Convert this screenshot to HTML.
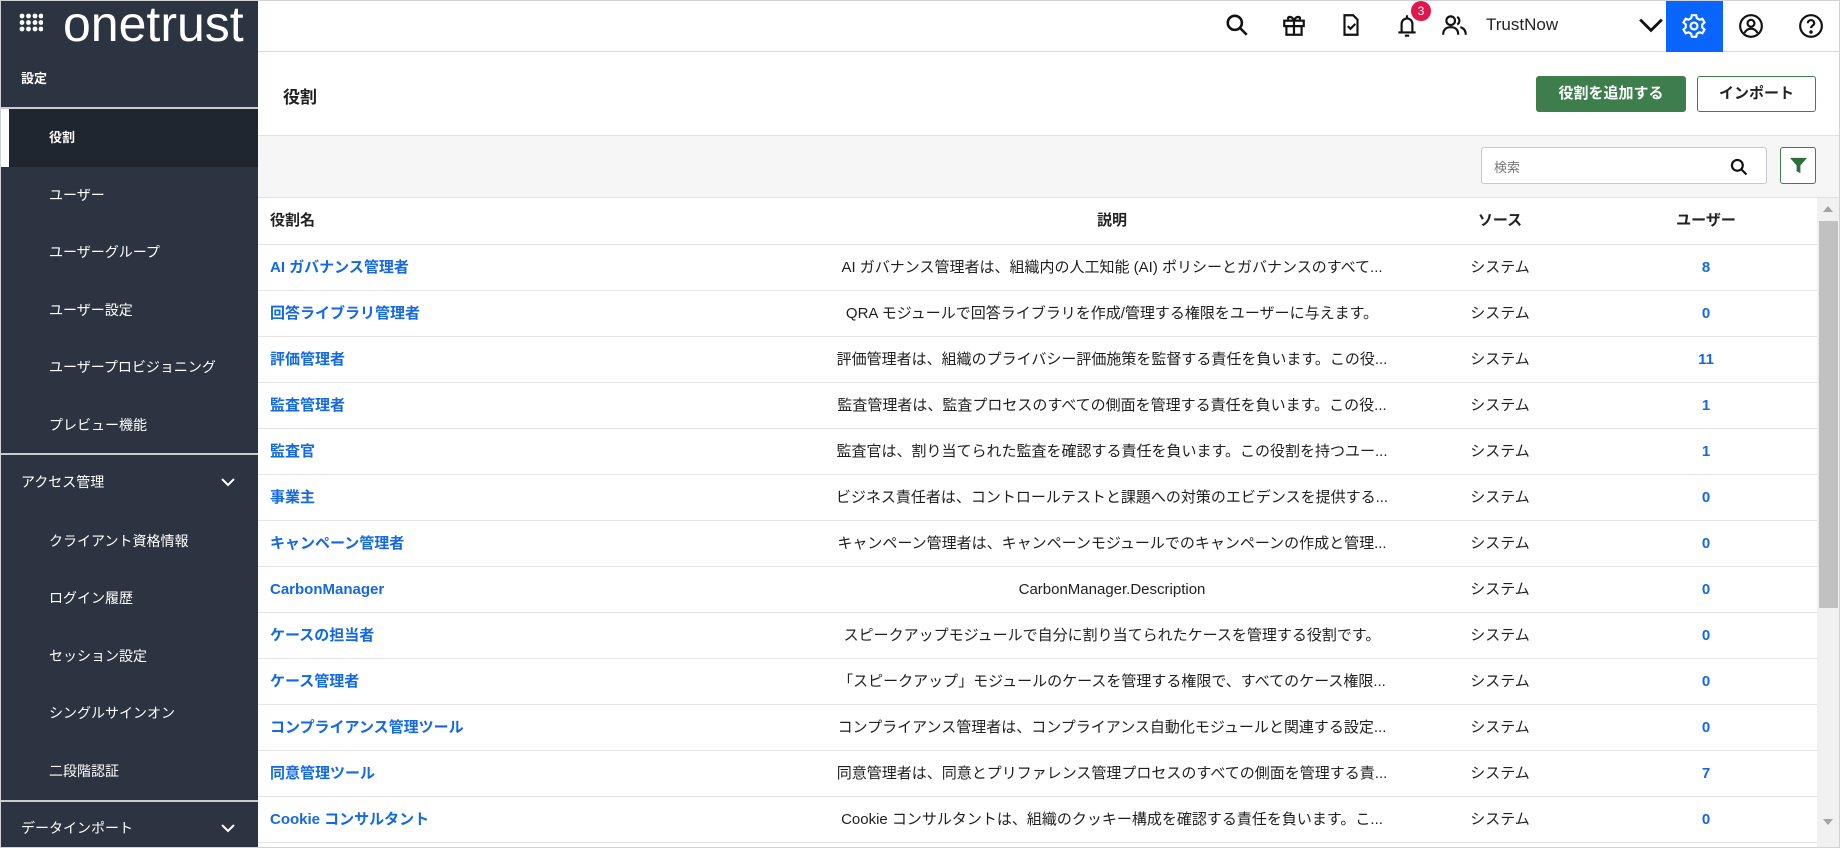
<!DOCTYPE html>
<html><head><meta charset="utf-8"><style>
*{box-sizing:border-box;margin:0;padding:0}
body{width:1840px;height:848px;overflow:hidden;font-family:"Liberation Sans","Noto Sans CJK JP",sans-serif;background:#fff;position:relative;color:#1f1f1f}
.a{position:absolute}
#side{left:0;top:0;width:258px;height:848px;background:#2c3441;color:#fff}
.si{position:absolute;left:0;width:258px;font-size:14px;padding-left:49px;line-height:20px}
.sec{padding-left:21px}
.dv{position:absolute;left:0;width:258px;height:2px;background:#c9ccd1}
.chev{position:absolute;right:22px;top:2px}
#top{left:258px;top:0;width:1582px;height:52px;border-bottom:1px solid #d4d6d9;background:#fff}
.ic{position:absolute;top:12px}
.row{position:absolute;left:258px;width:1559px;height:46px;border-bottom:1px solid #e3e4e6;font-size:15px}
.row span{line-height:20px}
.row .n{position:absolute;left:12px;top:13px;color:#1369e3;font-weight:bold}
.row .d{position:absolute;left:294px;width:1120px;text-align:center;top:13px}
.row .s{position:absolute;left:1192px;width:100px;text-align:center;top:13px}
.row .u{position:absolute;left:1398px;width:100px;text-align:center;top:13px;color:#1369e3;font-weight:bold}
</style></head><body>
<div id="side" class="a">
 <svg class="a" style="left:19px;top:13px" width="24" height="24" viewBox="0 0 24 24" fill="#fff">
  <circle cx="3" cy="3" r="2.4"/><circle cx="9.5" cy="3" r="2.4"/><circle cx="16" cy="3" r="2.4"/><circle cx="22" cy="3" r="2.4"/>
  <circle cx="3" cy="9.5" r="2.4"/><circle cx="9.5" cy="9.5" r="2.4"/><circle cx="16" cy="9.5" r="2.4"/><circle cx="22" cy="9.5" r="2.4"/>
  <circle cx="3" cy="16" r="2.4"/><circle cx="9.5" cy="16" r="2.4"/><circle cx="16" cy="16" r="2.4"/><circle cx="22" cy="16" r="2.4"/>
 </svg>
 <div class="a" style="left:63px;top:0;font-size:50px;line-height:48px;color:#fff;letter-spacing:0">onetrust</div>
 <div class="si sec" style="top:69px;font-weight:bold;font-size:13px">設定</div>
 <div class="dv" style="top:107px"></div>
 <div class="a" style="left:0;top:109px;width:258px;height:58px;background:#20262f"></div>
 <div class="a" style="left:0;top:109px;width:9px;height:58px;background:#fff"></div>
 <div class="si" style="top:128px;font-weight:bold;font-size:13px">役割</div>
 <div class="si" style="top:185px">ユーザー</div>
 <div class="si" style="top:242px">ユーザーグループ</div>
 <div class="si" style="top:300px">ユーザー設定</div>
 <div class="si" style="top:357px">ユーザープロビジョニング</div>
 <div class="si" style="top:415px">プレビュー機能</div>
 <div class="dv" style="top:453px"></div>
 <div class="si sec" style="top:472px">アクセス管理<svg class="chev" width="16" height="16" viewBox="0 0 16 16"><path d="M2 5l6 6 6-6" stroke="#fff" stroke-width="2" fill="none"/></svg></div>
 <div class="si" style="top:531px">クライアント資格情報</div>
 <div class="si" style="top:588px">ログイン履歴</div>
 <div class="si" style="top:646px">セッション設定</div>
 <div class="si" style="top:703px">シングルサインオン</div>
 <div class="si" style="top:761px">二段階認証</div>
 <div class="dv" style="top:800px"></div>
 <div class="si sec" style="top:818px">データインポート<svg class="chev" width="16" height="16" viewBox="0 0 16 16"><path d="M2 5l6 6 6-6" stroke="#fff" stroke-width="2" fill="none"/></svg></div>
</div>

<div id="top" class="a">
 <svg class="ic" style="left:966px" width="26" height="26" viewBox="0 0 24 24" fill="none" stroke="#111" stroke-width="2.4"><circle cx="10" cy="10" r="6.5"/><path d="M15 15l6 6"/></svg>
 <svg class="ic" style="left:1023px" width="26" height="26" viewBox="0 0 24 24" fill="none" stroke="#111" stroke-width="2"><rect x="3" y="8" width="18" height="5"/><rect x="5" y="13" width="14" height="8"/><path d="M12 8v13M12 8c-2-5-7-4-5-1M12 8c2-5 7-4 5-1"/></svg>
 <svg class="ic" style="left:1080px" width="26" height="26" viewBox="0 0 24 24" fill="none" stroke="#111" stroke-width="2"><path d="M6 3h8l4 4v14H6z"/><path d="M9 13l2.5 2.5L16 11"/></svg>
 <svg class="ic" style="left:1136px" width="26" height="28" viewBox="0 0 24 26" fill="none" stroke="#111" stroke-width="2"><path d="M12 3v2M7 19V11a5 5 0 0110 0v8M4 19h16M10 22h4"/></svg>
 <div class="a" style="left:1153px;top:1px;width:20px;height:20px;border-radius:10px;background:#e0174a;color:#fff;font-size:12px;text-align:center;line-height:20px">3</div>
 <svg class="ic" style="left:1183px" width="28" height="26" viewBox="0 0 26 24" fill="none" stroke="#111" stroke-width="2"><circle cx="9" cy="8" r="4"/><path d="M2 21c0-5 3-7 7-7s7 2 7 7"/><path d="M15 4.5a4 4 0 010 7M18 14c3 1 5 3 5 7"/></svg>
 <div class="a" style="left:1228px;top:15px;font-size:17px;color:#222">TrustNow</div>
 <svg class="ic" style="left:1380px;top:14px" width="26" height="22" viewBox="0 0 24 20"><path d="M2 5l10 10L22 5" stroke="#111" stroke-width="2.6" fill="none"/></svg>
 <div class="a" style="left:1408px;top:0;width:57px;height:52px;background:#0866ff"></div>
 <svg class="ic" style="left:1423px;top:13px" width="26" height="26" viewBox="0 0 24 24" fill="none" stroke="#fff" stroke-width="2"><circle cx="12" cy="12" r="3.2"/><path d="M10 2h4l.6 2.8 2.4 1.4 2.7-.9 2 3.4-2.1 1.9v2.8l2.1 1.9-2 3.4-2.7-.9-2.4 1.4L14 22h-4l-.6-2.8L7 17.8l-2.7.9-2-3.4L4.4 13.4v-2.8L2.3 8.7l2-3.4 2.7.9 2.4-1.4z"/></svg>
 <svg class="ic" style="left:1480px;top:13px" width="26" height="26" viewBox="0 0 24 24" fill="none" stroke="#111" stroke-width="2"><circle cx="12" cy="12" r="10"/><circle cx="12" cy="9.5" r="3.2"/><path d="M6 18.5c1.5-3 3.5-4 6-4s4.5 1 6 4"/></svg>
 <svg class="ic" style="left:1540px;top:13px" width="26" height="26" viewBox="0 0 24 24" fill="none" stroke="#111" stroke-width="2"><circle cx="12" cy="12" r="10"/><path d="M9 9.5a3 3 0 116 0c0 2-3 2.2-3 4.5"/><circle cx="12" cy="17.5" r=".6" fill="#111"/></svg>
</div>

<div class="a" style="left:283px;top:83px;font-size:17px;font-weight:bold">役割</div>
<div class="a" style="left:1536px;top:76px;width:150px;height:36px;background:#3e7e4d;border-radius:3px;color:#fff;font-weight:bold;font-size:15px;text-align:center;line-height:36px">役割を追加する</div>
<div class="a" style="left:1697px;top:76px;width:119px;height:36px;border:1px solid #3e7e4d;border-radius:3px;color:#222;font-weight:bold;font-size:15px;text-align:center;line-height:34px">インポート</div>

<div class="a" style="left:258px;top:135px;width:1582px;height:63px;background:#f6f6f6;border-top:1px solid #e2e2e2;border-bottom:1px solid #e2e2e2"></div>
<div class="a" style="left:1481px;top:147px;width:286px;height:37px;background:#fff;border:1px solid #c6c9cd;border-radius:3px"><span class="a" style="left:12px;top:9px;font-size:13px;color:#777">検索</span>
 <svg class="a" style="left:247px;top:9px" width="20" height="20" viewBox="0 0 24 24" fill="none" stroke="#111" stroke-width="2.6"><circle cx="10" cy="10" r="6.5"/><path d="M15 15l6 6"/></svg></div>
<div class="a" style="left:1780px;top:147px;width:36px;height:37px;background:#fff;border:1px solid #3e7e4d;border-radius:3px">
 <svg class="a" style="left:8px;top:8px" width="19" height="19" viewBox="0 0 20 20"><path d="M1 2h18l-7 8v8l-4-2v-6z" fill="#2f6e3d"/></svg></div>

<div class="row" style="top:198px;height:47px;font-weight:bold">
 <span class="a" style="left:12px;top:13px;color:#222">役割名</span>
 <span class="d" style="color:#222">説明</span>
 <span class="s" style="color:#222">ソース</span>
 <span class="u" style="color:#222">ユーザー</span>
</div>
<div class="row" style="top:245px"><span class="n">AI ガバナンス管理者</span><span class="d">AI ガバナンス管理者は、組織内の人工知能 (AI) ポリシーとガバナンスのすべて...</span><span class="s">システム</span><span class="u">8</span></div>
<div class="row" style="top:291px"><span class="n">回答ライブラリ管理者</span><span class="d">QRA モジュールで回答ライブラリを作成/管理する権限をユーザーに与えます。</span><span class="s">システム</span><span class="u">0</span></div>
<div class="row" style="top:337px"><span class="n">評価管理者</span><span class="d">評価管理者は、組織のプライバシー評価施策を監督する責任を負います。この役...</span><span class="s">システム</span><span class="u">11</span></div>
<div class="row" style="top:383px"><span class="n">監査管理者</span><span class="d">監査管理者は、監査プロセスのすべての側面を管理する責任を負います。この役...</span><span class="s">システム</span><span class="u">1</span></div>
<div class="row" style="top:429px"><span class="n">監査官</span><span class="d">監査官は、割り当てられた監査を確認する責任を負います。この役割を持つユー...</span><span class="s">システム</span><span class="u">1</span></div>
<div class="row" style="top:475px"><span class="n">事業主</span><span class="d">ビジネス責任者は、コントロールテストと課題への対策のエビデンスを提供する...</span><span class="s">システム</span><span class="u">0</span></div>
<div class="row" style="top:521px"><span class="n">キャンペーン管理者</span><span class="d">キャンペーン管理者は、キャンペーンモジュールでのキャンペーンの作成と管理...</span><span class="s">システム</span><span class="u">0</span></div>
<div class="row" style="top:567px"><span class="n">CarbonManager</span><span class="d">CarbonManager.Description</span><span class="s">システム</span><span class="u">0</span></div>
<div class="row" style="top:613px"><span class="n">ケースの担当者</span><span class="d">スピークアップモジュールで自分に割り当てられたケースを管理する役割です。</span><span class="s">システム</span><span class="u">0</span></div>
<div class="row" style="top:659px"><span class="n">ケース管理者</span><span class="d">「スピークアップ」モジュールのケースを管理する権限で、すべてのケース権限...</span><span class="s">システム</span><span class="u">0</span></div>
<div class="row" style="top:705px"><span class="n">コンプライアンス管理ツール</span><span class="d">コンプライアンス管理者は、コンプライアンス自動化モジュールと関連する設定...</span><span class="s">システム</span><span class="u">0</span></div>
<div class="row" style="top:751px"><span class="n">同意管理ツール</span><span class="d">同意管理者は、同意とプリファレンス管理プロセスのすべての側面を管理する責...</span><span class="s">システム</span><span class="u">7</span></div>
<div class="row" style="top:797px"><span class="n">Cookie コンサルタント</span><span class="d">Cookie コンサルタントは、組織のクッキー構成を確認する責任を負います。こ...</span><span class="s">システム</span><span class="u">0</span></div>

<div class="a" style="left:1817px;top:198px;width:23px;height:650px;background:#f1f1f1"></div>
<svg class="a" style="left:1823px;top:205px" width="10" height="8"><path d="M0 7L5 1 10 7z" fill="#a3a3a3"/></svg>
<div class="a" style="left:1819px;top:221px;width:19px;height:387px;background:#c1c1c1"></div>
<svg class="a" style="left:1823px;top:818px" width="10" height="8"><path d="M0 1L5 7 10 1z" fill="#a3a3a3"/></svg>
<div class="a" style="left:0;top:0;width:1840px;height:848px;border:1px solid #cfd2d6;pointer-events:none"></div>
</body></html>
